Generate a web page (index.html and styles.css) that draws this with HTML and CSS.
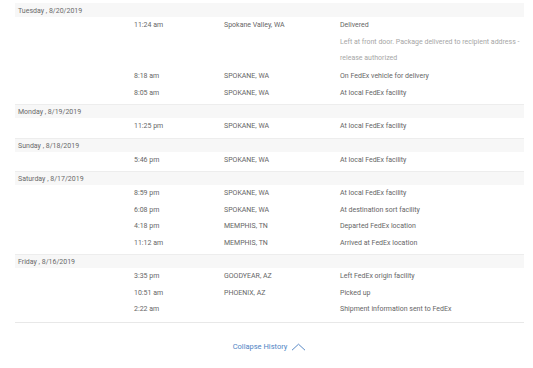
FILE: index.html
```html
<!DOCTYPE html>
<html>
<head>
<meta charset="utf-8">
<link rel="stylesheet" href="styles.css">
</head>
<body>
<div class="history">
  <div class="day">
    <div class="day-head">Tuesday , 8/20/2019</div>
    <div class="rows">
      <div class="row"><span class="time">11:24 am</span><span class="loc">Spokane Valley, WA</span><span class="desc">Delivered<span class="sub">Left at front door. Package delivered to recipient address - release authorized</span></span></div>
      <div class="row"><span class="time">8:18 am</span><span class="loc">SPOKANE, WA</span><span class="desc">On FedEx vehicle for delivery</span></div>
      <div class="row"><span class="time">8:05 am</span><span class="loc">SPOKANE, WA</span><span class="desc">At local FedEx facility</span></div>
    </div>
  </div>
  <div class="day">
    <div class="day-head">Monday , 8/19/2019</div>
    <div class="rows">
      <div class="row"><span class="time">11:25 pm</span><span class="loc">SPOKANE, WA</span><span class="desc">At local FedEx facility</span></div>
    </div>
  </div>
  <div class="day">
    <div class="day-head">Sunday , 8/18/2019</div>
    <div class="rows">
      <div class="row"><span class="time">5:46 pm</span><span class="loc">SPOKANE, WA</span><span class="desc">At local FedEx facility</span></div>
    </div>
  </div>
  <div class="day">
    <div class="day-head">Saturday , 8/17/2019</div>
    <div class="rows">
      <div class="row"><span class="time">8:59 pm</span><span class="loc">SPOKANE, WA</span><span class="desc">At local FedEx facility</span></div>
      <div class="row"><span class="time">6:08 pm</span><span class="loc">SPOKANE, WA</span><span class="desc">At destination sort facility</span></div>
      <div class="row"><span class="time">4:18 pm</span><span class="loc">MEMPHIS, TN</span><span class="desc">Departed FedEx location</span></div>
      <div class="row"><span class="time">11:12 am</span><span class="loc">MEMPHIS, TN</span><span class="desc">Arrived at FedEx location</span></div>
    </div>
  </div>
  <div class="day last">
    <div class="day-head">Friday , 8/16/2019</div>
    <div class="rows">
      <div class="row"><span class="time">3:35 pm</span><span class="loc">GOODYEAR, AZ</span><span class="desc">Left FedEx origin facility</span></div>
      <div class="row"><span class="time">10:51 am</span><span class="loc">PHOENIX, AZ</span><span class="desc">Picked up</span></div>
      <div class="row"><span class="time">2:22 am</span><span class="loc"></span><span class="desc">Shipment information sent to FedEx</span></div>
    </div>
  </div>
  <div class="collapse">
    <span class="collapse-link">Collapse History
      <svg class="chev" width="15" height="8" viewBox="0 0 15 8"><path d="M1 7.2 L7.5 1.2 L14 7.2" fill="none" stroke="#5a8ac6" stroke-width="1"/></svg>
    </span>
  </div>
</div>
</body>
</html>
```

FILE: styles.css
```css
html, body {
  margin: 0;
  padding: 0;
  background: #ffffff;
}

body {
  font-family: Roboto, "Liberation Sans", Arial, sans-serif;
  font-size: 7px;
  color: #666666;
}

.history {
  padding: 3px 9px 0 15px;
}

.day-head {
  height: 14px;
  line-height: 14px;
  background: #f7f7f7;
  border-top: 1px solid #ededed;
  box-sizing: border-box;
  padding-left: 3px;
  color: #6a6a6a;
}

.day:first-child .day-head {
  border-top-color: #f7f7f7;
}

.rows {
  padding-top: 1px;
  padding-bottom: 2px;
}

.last .rows {
  padding-bottom: 3.5px;
  border-bottom: 1px solid #e8e8e8;
}

.row {
  display: grid;
  grid-template-columns: 90px 116px 184px;
  padding-left: 119px;
  line-height: 14px;
  padding-bottom: 2.5px;
  color: #666666;
}

.sub {
  display: block;
  color: #a6a6a6;
  line-height: 16.5px;
  margin-top: 1.5px;
  padding-right: 4px;
}

.collapse {
  display: flex;
  justify-content: center;
  padding-top: 18px;
}

.collapse-link {
  display: inline-flex;
  align-items: center;
  gap: 4px;
  color: #4f84c4;
  font-size: 7.5px;
  line-height: 12px;
}

.chev {
  display: block;
  margin-top: -1px;
}
```
